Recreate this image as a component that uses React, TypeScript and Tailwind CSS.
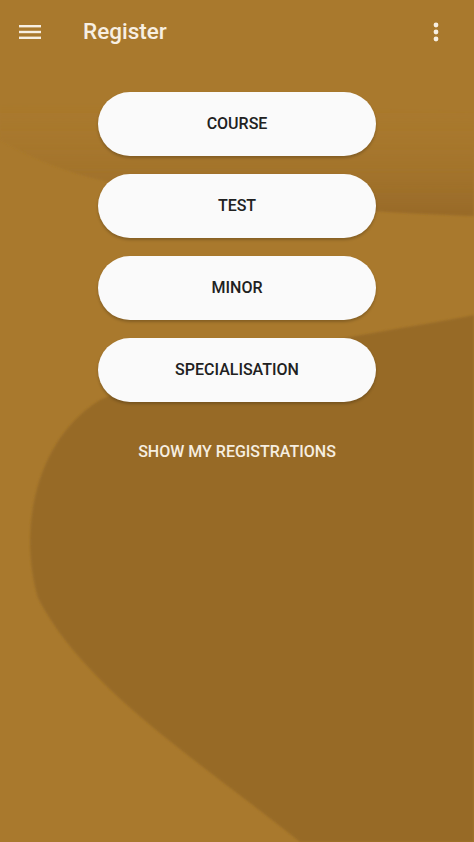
import React from "react";

const items = ["COURSE", "TEST", "MINOR", "SPECIALISATION"];

function Backdrop() {
  return (
    <svg
      className="absolute inset-0 h-full w-full"
      viewBox="0 0 474 842"
      preserveAspectRatio="none"
      aria-hidden="true"
    >
      <defs>
        <filter id="soft2" x="-10%" y="-10%" width="120%" height="120%">
          <feGaussianBlur stdDeviation="1.2" />
        </filter>
        <linearGradient id="band" x1="0" y1="0" x2="0" y2="1">
          <stop offset="0" stopColor="#a9792d" stopOpacity="0" />
          <stop offset="1" stopColor="#986a28" stopOpacity="1" />
        </linearGradient>
      </defs>
      <path
        d="M0,105 C150,100 330,110 474,112 L474,216 C400,214 250,205 110,182 C60,172 20,152 0,140 Z"
        fill="url(#band)"
        filter="url(#soft2)"
      />
      <path
        d="M474,315 C380,334 200,356 100,400 C35,440 18,530 38,598 C85,690 205,765 300,842 L474,842 Z"
        fill="#976a28"
        filter="url(#soft2)"
      />
    </svg>
  );
}

export default function App() {
  return (
    <div
      className="relative min-h-[842px] w-full overflow-hidden bg-[#a9792d]"
      style={{ fontFamily: "Roboto, 'Liberation Sans', sans-serif" }}
    >
      <Backdrop />
      <div className="relative flex flex-col">
        <header className="flex h-16 items-center">
          <div className="flex w-[83px] items-center pl-[19px]">
            <svg width="22" height="16" viewBox="0 0 22 16" fill="#f7efe2">
              <rect x="0" y="1" width="22" height="2.4" />
              <rect x="0" y="6.8" width="22" height="2.4" />
              <rect x="0" y="12.6" width="22" height="2.4" />
            </svg>
          </div>
          <h1 className="flex-1 text-[22.5px] font-medium text-[#f7efe2]">Register</h1>
          <div className="flex w-[76px] justify-center">
            <svg width="6" height="20" viewBox="0 0 6 20" fill="#f7efe2">
              <circle cx="3" cy="3" r="2.4" />
              <circle cx="3" cy="10" r="2.4" />
              <circle cx="3" cy="17" r="2.4" />
            </svg>
          </div>
        </header>

        <div className="mt-[28px] flex flex-col items-center gap-[18px]">
          {items.map((t) => (
            <button
              key={t}
              className="flex h-[64px] w-[278px] items-center justify-center rounded-full bg-[#fafafa] pb-[1px] text-[16px] font-medium text-[#212121] shadow-[0_2px_3px_rgba(0,0,0,0.22)]"
            >
              {t}
            </button>
          ))}
        </div>

        <div className="mt-[40px] text-center text-[16px] font-medium leading-5 text-[#f6eee0]">
          SHOW MY REGISTRATIONS
        </div>
      </div>
    </div>
  );
}
